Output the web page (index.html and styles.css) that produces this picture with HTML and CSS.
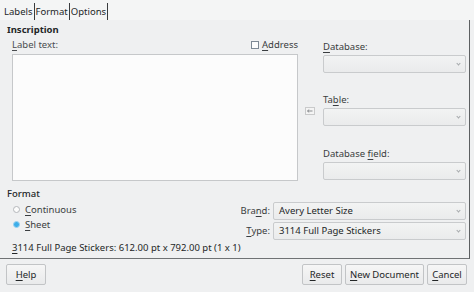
FILE: index.html
```html
<!DOCTYPE html>
<html lang="en">
<head>
    <meta charset="UTF-8">
    <title>Labels</title>
    <link rel="stylesheet" href="styles.css">
</head>
<body>
    <div class="tabs">
        <span class="tab">Labels</span>
        <span class="tab">Format</span>
        <span class="tab">Options</span>
    </div>

    <div class="panel">
        <div class="group-title">Inscription</div>
        <div class="inscription">
            <div class="left-col">
                <div class="label-row">
                    <span><u>L</u>abel text:</span>
                    <span class="check"><span class="box"></span><u>A</u>ddress</span>
                </div>
                <textarea class="label-text"></textarea>
            </div>
            <div class="arrow-btn">
                <svg width="10" height="8" viewBox="0 0 10 8">
                    <rect x="0.5" y="0.5" width="9" height="7" fill="#f4f4f4" stroke="#c9cacb"/>
                    <path d="M2.5 4 L7.5 4 M2.5 4 L4.2 2.6 M2.5 4 L4.2 5.4" stroke="#8a8d90" stroke-width="1" fill="none"/>
                </svg>
            </div>
            <div class="right-col">
                <div class="field-label"><u>D</u>atabase:</div>
                <div class="combo"><span></span><i class="chev"></i></div>
                <div class="field-label second">Ta<u>b</u>le:</div>
                <div class="combo"><span></span><i class="chev"></i></div>
                <div class="field-label third">Database <u>f</u>ield:</div>
                <div class="combo"><span></span><i class="chev"></i></div>
            </div>
        </div>

        <div class="group-title format-title">Format</div>
        <div class="format">
            <div class="radios">
                <div class="radio"><span class="dot"></span><u>C</u>ontinuous</div>
                <div class="radio"><span class="dot on"></span><u>S</u>heet</div>
            </div>
            <div class="brand-form">
                <span class="form-label">Bra<u>n</u>d:</span>
                <div class="combo"><span>Avery Letter Size</span><i class="chev"></i></div>
                <span class="form-label"><u>T</u>ype:</span>
                <div class="combo"><span>3114 Full Page Stickers</span><i class="chev"></i></div>
            </div>
        </div>
        <div class="info"><u>3</u>114 Full Page Stickers: 612.00 pt x 792.00 pt (1 x 1)</div>
    </div>

    <div class="buttons">
        <button class="button"><u>H</u>elp</button>
        <div class="spacer"></div>
        <button class="button"><u>R</u>eset</button>
        <button class="button"><u>N</u>ew Document</button>
        <button class="button"><u>C</u>ancel</button>
    </div>
</body>
</html>
```

FILE: styles.css
```css
body {
    margin: 0;
    width: 474px;
    height: 292px;
    background-color: #eff0f1;
    color: #232627;
    font-family: "Noto Sans", sans-serif;
    font-size: 9.5px;
    line-height: 14px;
    overflow: hidden;
}
u {
    text-decoration-thickness: 1px;
    text-underline-offset: 2px;
}
.tabs {
    display: flex;
    height: 20px;
    padding: 3px 0 0 3px;
    box-sizing: border-box;
    background-color: #f4f5f5;
}
.tab {
    padding: 1px 1px 0 1px;
    border-right: 1px solid #3a3c3e;
    line-height: 15px;
}
.panel {
    width: 470px;
    box-sizing: border-box;
    border-right: 1px solid #5c5f61;
    border-bottom: 1px solid #6f7274;
    padding: 3px 0 3px 7px;
}
.group-title {
    font-weight: 700;
}
.format-title {
    margin-top: 6px;
    font-weight: 500;
}
.inscription {
    display: grid;
    grid-template-columns: 286px 10px 144px;
    column-gap: 7px;
    padding-left: 5px;
    margin-top: 1px;
}
.label-row {
    display: flex;
    justify-content: space-between;
    color: #4a4d50;
}
.check {
    display: flex;
    align-items: center;
    color: #3a3d40;
}
.box {
    width: 6px;
    height: 6px;
    border: 1px solid #7d8894;
    background-color: #fcfcfc;
    margin-right: 3px;
}
.label-text {
    display: block;
    width: 286px;
    height: 127px;
    margin: 2px 0 0 0;
    box-sizing: border-box;
    background-color: #fcfcfc;
    border: 1px solid #c6c8ca;
    resize: none;
}
.arrow-btn {
    align-self: center;
    display: flex;
    margin-top: 2px;
}
.right-col {
    margin-left: 1px;
}
.field-label {
    margin: 2px 0 1px 0;
    color: #3a3d40;
}
.field-label.second {
    margin-top: 20px;
}
.field-label.third {
    margin-top: 21px;
}
.combo {
    display: flex;
    align-items: center;
    justify-content: space-between;
    height: 18px;
    box-sizing: border-box;
    padding: 0 5px;
    border: 1px solid #c9cbcd;
    border-radius: 2px;
    background: linear-gradient(#f2f3f3, #eaebec);
}
.chev {
    width: 2px;
    height: 2px;
    border-right: 1px solid #a5a8ab;
    border-bottom: 1px solid #a5a8ab;
    transform: rotate(45deg);
    margin-top: -1px;
}
.format {
    display: flex;
    justify-content: space-between;
    padding-left: 5px;
    margin-top: 1px;
}
.radio {
    display: flex;
    align-items: center;
    height: 15px;
    color: #3a3d40;
}
.dot {
    width: 5px;
    height: 5px;
    border: 1px solid #b4b7ba;
    border-radius: 50%;
    margin: 0 5px 0 1px;
    background-color: #fcfcfc;
}
.dot.on {
    background-color: #3daee9;
    border-color: #9fd3f1;
}
.brand-form {
    display: grid;
    grid-template-columns: auto 193px;
    column-gap: 3px;
    row-gap: 2px;
    align-items: center;
    margin-right: 3px;
}
.form-label {
    text-align: right;
    color: #3a3d40;
}
.info {
    margin: 1px 0 0 5px;
}
.buttons {
    display: flex;
    gap: 3px;
    padding: 5px 7px 0 6px;
}
.spacer {
    flex: 1;
}
.button {
    height: 21px;
    min-width: 40px;
    padding: 0 4px;
    font-family: inherit;
    font-size: 9.5px;
    color: #232627;
    background: linear-gradient(#f6f6f6, #e9eaeb);
    border: 1px solid #c2c4c6;
    border-radius: 2px;
}
```
